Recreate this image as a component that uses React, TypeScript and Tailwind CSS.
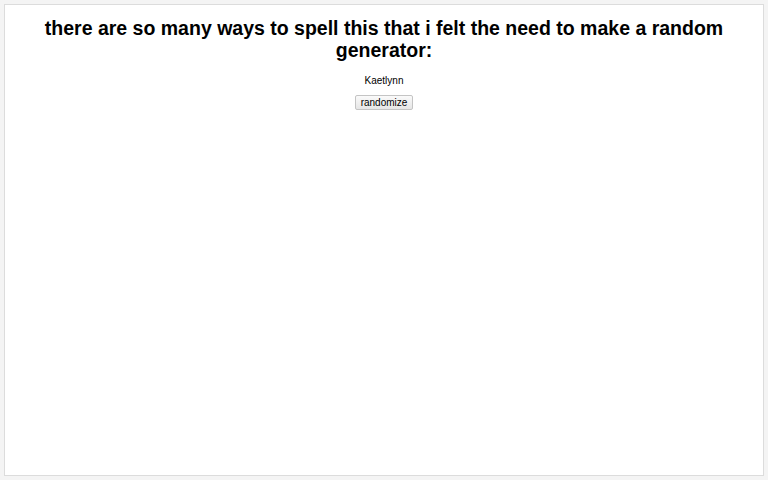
import { useState } from "react";

const SPELLINGS = ["Kaetlynn", "Caitlin", "Katelyn", "Kaitlyn", "Caitlyn", "Katelynn", "Kaytlin", "Caitlynn"];

export default function App() {
  const [name, setName] = useState("Kaetlynn");

  function randomize() {
    setName(SPELLINGS[Math.floor(Math.random() * SPELLINGS.length)]);
  }

  return (
    <div className="h-[480px] w-[768px] bg-[#f4f4f4] p-[4px] font-['Liberation_Sans',Arial,sans-serif] text-black">
      <div className="flex h-full flex-col items-center border border-[#dcdcdc] bg-white px-[8px] pt-[12px]">
        <h1 className="text-center text-[19.5px] font-bold leading-[22px]">
          there are so many ways to spell this that i felt the need to make a random generator:
        </h1>
        <p className="mt-[14px] text-[10px] leading-[12px]">{name}</p>
        <button
          onClick={randomize}
          className="mt-[8px] h-[15px] rounded-[2px] border border-[#c4c4c4] bg-gradient-to-b from-[#fafafa] to-[#e6e6e6] px-[5px] text-[10px] leading-[12px]"
        >
          randomize
        </button>
      </div>
    </div>
  );
}
